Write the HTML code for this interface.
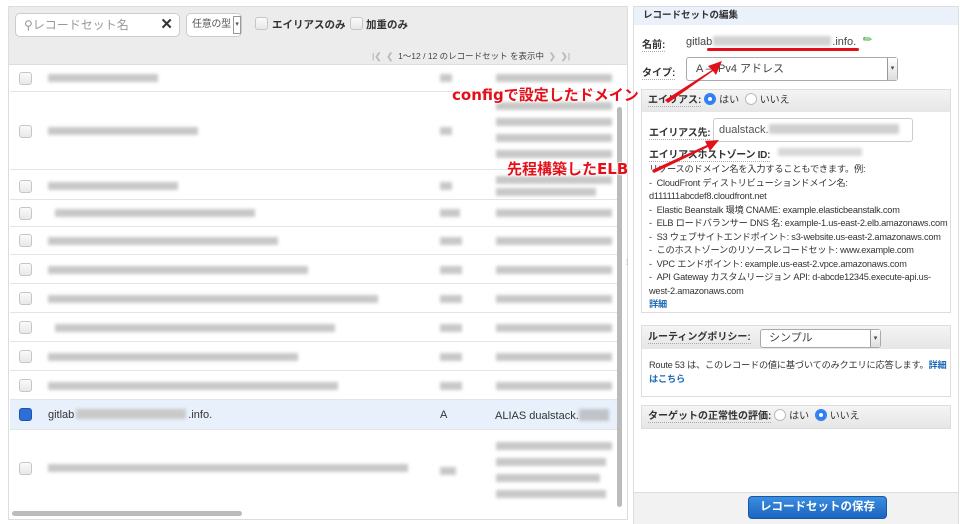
<!DOCTYPE html>
<html><head><meta charset="utf-8">
<style>
*{box-sizing:border-box;margin:0;padding:0}
body{width:960px;height:524px;overflow:hidden;background:#fff;font-family:"Liberation Sans","Noto Sans CJK JP",sans-serif;font-size:11px;color:#333;position:relative}
.a{position:absolute;white-space:nowrap}
.bl{position:absolute;background:#c8c8c8;filter:blur(1.5px);height:8px}
.cb{position:absolute;width:13px;height:13px;border:1px solid #c6c6c6;border-radius:3px;background:linear-gradient(#fafafa,#e8e8e8)}
.row{position:absolute;left:10px;width:608px;border-bottom:1px solid #e4e4e4}
.lbl{font-weight:bold;border-bottom:1px dotted #aaa}
.red{position:absolute;color:#e3101a;font-weight:bold;font-size:15px;text-shadow:0 0 2px #fff,0 0 2px #fff,0 0 2px #fff;font-family:"Noto Sans CJK JP",sans-serif;white-space:nowrap}
.sel{position:absolute;border:1px solid #aaa;border-radius:3px;background:#fff;white-space:nowrap}
.dd{position:absolute;right:0;top:0;bottom:0;width:10px;border-left:1px solid #999;background:linear-gradient(#fff,#ddd);font-size:7px;text-align:center}
.radio{display:inline-block;width:12px;height:12px;border-radius:50%;border:1px solid #bbb;background:#fff;vertical-align:-2px;margin-right:3px}
.radio.on{background:#2f7ff0;border-color:#2f7ff0;box-shadow:inset 0 0 0 3px #2f7ff0,inset 0 0 0 6px #fff}
.txt{font-size:9.2px;line-height:13.5px;color:#333;letter-spacing:-0.2px;white-space:nowrap}
</style></head><body>
<div class="a" style="left:8px;top:6px;width:620px;height:514px;border:1px solid #ddd"></div>
<div class="a" style="left:9px;top:7px;width:618px;height:58px;background:#ececec;border-bottom:1px solid #ddd"></div>
<div class="a" style="left:15px;top:13px;width:165px;height:24px;border:1px solid #ccc;border-radius:5px;background:#fff;color:#999;font-size:12px;line-height:22px;padding-left:8px">⚲レコードセット名<span style="position:absolute;right:6px;color:#333;font-size:15px;font-weight:bold">✕</span></div>
<div class="a" style="left:186px;top:13px;width:56px;height:24px;border:1px solid #ccc;border-radius:5px;background:#fff;font-size:10px;line-height:22px;padding-left:5px;color:#555;letter-spacing:-0.3px"><span style="display:inline-block;line-height:22px;vertical-align:top">任意の型</span><span style="position:absolute;right:0;top:2px;width:8px;height:18px;border:1px solid #999;font-size:7px;line-height:16px;text-align:center;background:#fff">▾</span></div>
<div class="cb" style="left:255px;top:17px"></div>
<div class="a" style="left:272px;top:17px;font-weight:bold;font-size:10.5px">エイリアスのみ</div>
<div class="cb" style="left:350px;top:17px"></div>
<div class="a" style="left:366px;top:17px;font-weight:bold;font-size:10.5px">加重のみ</div>
<div class="a" style="left:372px;top:50px;font-size:8.5px;color:#444"><span style="color:#bbb;font-weight:bold">|❮ &nbsp;❮</span> &nbsp;1～12 / 12 のレコードセット を表示中 <span style="color:#bbb;font-weight:bold">&nbsp;❯ &nbsp;❯|</span></div>

<div class="row" style="top:65px;height:27px"></div>
<div class="row" style="top:92px;height:78px"></div>
<div class="row" style="top:170px;height:30px"></div>
<div class="row" style="top:200px;height:27px"></div>
<div class="row" style="top:227px;height:28px"></div>
<div class="row" style="top:255px;height:29px"></div>
<div class="row" style="top:284px;height:29px"></div>
<div class="row" style="top:313px;height:29px"></div>
<div class="row" style="top:342px;height:29px"></div>
<div class="row" style="top:371px;height:29px"></div>
<div class="row" style="top:400px;height:30px;background:#e8f0fb"></div>
<div class="cb" style="left:19px;top:72px"></div>
<div class="cb" style="left:19px;top:125px"></div>
<div class="cb" style="left:19px;top:180px"></div>
<div class="cb" style="left:19px;top:207px"></div>
<div class="cb" style="left:19px;top:234px"></div>
<div class="cb" style="left:19px;top:263px"></div>
<div class="cb" style="left:19px;top:292px"></div>
<div class="cb" style="left:19px;top:321px"></div>
<div class="cb" style="left:19px;top:350px"></div>
<div class="cb" style="left:19px;top:379px"></div>
<div class="a" style="left:19px;top:408px;width:13px;height:13px;border-radius:3px;background:#2d6fd6;border:1px solid #1c55b0"></div>
<div class="cb" style="left:19px;top:462px"></div>

<div class="bl" style="left:48px;top:74px;width:110px"></div><div class="bl" style="left:440px;top:74px;width:12px"></div><div class="bl" style="left:496px;top:74px;width:116px"></div>
<div class="bl" style="left:48px;top:127px;width:150px"></div><div class="bl" style="left:440px;top:127px;width:12px"></div>
<div class="bl" style="left:496px;top:102px;width:116px"></div><div class="bl" style="left:496px;top:118px;width:116px"></div><div class="bl" style="left:496px;top:134px;width:116px"></div><div class="bl" style="left:496px;top:150px;width:116px"></div>
<div class="bl" style="left:48px;top:182px;width:130px"></div><div class="bl" style="left:440px;top:182px;width:12px"></div><div class="bl" style="left:496px;top:176px;width:116px"></div><div class="bl" style="left:496px;top:188px;width:100px"></div>
<div class="bl" style="left:55px;top:209px;width:200px"></div><div class="bl" style="left:440px;top:209px;width:20px"></div><div class="bl" style="left:496px;top:209px;width:116px"></div>
<div class="bl" style="left:48px;top:237px;width:230px"></div><div class="bl" style="left:440px;top:237px;width:22px"></div><div class="bl" style="left:496px;top:237px;width:116px"></div>
<div class="bl" style="left:48px;top:266px;width:260px"></div><div class="bl" style="left:440px;top:266px;width:22px"></div><div class="bl" style="left:496px;top:266px;width:116px"></div>
<div class="bl" style="left:48px;top:295px;width:330px"></div><div class="bl" style="left:440px;top:295px;width:22px"></div><div class="bl" style="left:496px;top:295px;width:116px"></div>
<div class="bl" style="left:55px;top:324px;width:280px"></div><div class="bl" style="left:440px;top:324px;width:22px"></div><div class="bl" style="left:496px;top:324px;width:116px"></div>
<div class="bl" style="left:48px;top:353px;width:250px"></div><div class="bl" style="left:440px;top:353px;width:22px"></div><div class="bl" style="left:496px;top:353px;width:116px"></div>
<div class="bl" style="left:48px;top:382px;width:290px"></div><div class="bl" style="left:440px;top:382px;width:22px"></div><div class="bl" style="left:496px;top:382px;width:116px"></div>
<div class="a" style="left:48px;top:409px;font-size:11px">gitlab<span style="display:inline-block;width:110px;height:10px;background:#c9c9c9;filter:blur(1.5px);margin:0 2px;vertical-align:-1px"></span>.info.</div>
<div class="a" style="left:440px;top:409px;font-size:11px">A</div>
<div class="a" style="left:495px;top:409px;font-size:11px">ALIAS dualstack.<span style="display:inline-block;width:30px;height:12px;background:#c0c4c8;filter:blur(1.5px);vertical-align:-2px"></span></div>
<div class="bl" style="left:48px;top:464px;width:360px"></div><div class="bl" style="left:440px;top:467px;width:16px"></div>
<div class="bl" style="left:496px;top:442px;width:116px"></div><div class="bl" style="left:496px;top:458px;width:110px"></div><div class="bl" style="left:496px;top:474px;width:104px"></div><div class="bl" style="left:496px;top:490px;width:110px"></div>

<div class="a" style="left:617px;top:107px;width:5px;height:400px;background:#bbb;border-radius:3px"></div>
<div class="a" style="left:12px;top:511px;width:230px;height:5px;background:#bbb;border-radius:3px"></div>
<div class="a" style="left:626px;top:258px;font-size:8px;color:#999">⁞</div>

<div class="a" style="left:633px;top:6px;width:326px;height:518px;border:1px solid #ddd;background:#fff"></div>
<div class="a" style="left:634px;top:7px;width:324px;height:18px;background:#eaf1fb;font-size:9.5px;font-weight:bold;line-height:18px;padding-left:9px;color:#333">レコードセットの編集</div>
<div class="a lbl" style="left:642px;top:36px;font-size:10px">名前:</div>
<div class="a" style="left:686px;top:36px;font-size:11px;color:#444">gitlab<span style="display:inline-block;width:118px;height:10px;background:#d2d2d2;filter:blur(1.5px);margin:0 1px;vertical-align:-1px"></span>.info.</div>
<div class="a" style="left:863px;top:33px;color:#3a3;font-size:11px;transform:rotate(-40deg)">✎</div>
<div class="a" style="left:707px;top:48px;width:152px;height:3px;background:#e3101a;border-radius:2px"></div>
<div class="a lbl" style="left:642px;top:64px;font-size:10px">タイプ:</div>
<div class="sel" style="left:686px;top:57px;width:212px;height:24px;font-size:11px;line-height:22px;padding-left:9px;color:#444">A – IPv4 アドレス<div class="dd" style="line-height:22px">▾</div></div>

<div class="a" style="left:641px;top:89px;width:310px;height:224px;border:1px solid #ddd"></div>
<div class="a" style="left:642px;top:90px;width:308px;height:22px;background:linear-gradient(#f4f4f4,#e6e6e6);font-size:10px;line-height:22px;padding-left:6px"><span class="lbl">エイリアス:</span> <span class="radio on"></span>はい &nbsp;<span class="radio"></span>いいえ</div>
<div class="a lbl" style="left:649px;top:124px;font-size:10px;letter-spacing:-0.3px">エイリアス先:</div>
<div class="a" style="left:713px;top:118px;width:200px;height:24px;border:1px solid #ccc;border-radius:3px;font-size:11px;line-height:22px;padding-left:5px;color:#555">dualstack.<span style="display:inline-block;width:130px;height:10px;background:#d0d0d0;filter:blur(1.5px);vertical-align:-1px"></span></div>
<div class="a lbl" style="left:649px;top:146px;font-size:10px;letter-spacing:-0.3px">エイリアスホストゾーン ID:</div>
<div class="bl" style="left:778px;top:148px;width:84px;background:#d8d8d8"></div>
<div class="a txt" style="left:649px;top:163px;width:300px">リソースのドメイン名を入力することもできます。例:<br>- &nbsp;CloudFront ディストリビューションドメイン名:<br>d111111abcdef8.cloudfront.net<br>- &nbsp;Elastic Beanstalk 環境 CNAME: example.elasticbeanstalk.com<br>- &nbsp;ELB ロードバランサー DNS 名: example-1.us-east-2.elb.amazonaws.com<br>- &nbsp;S3 ウェブサイトエンドポイント: s3-website.us-east-2.amazonaws.com<br>- &nbsp;このホストゾーンのリソースレコードセット: www.example.com<br>- &nbsp;VPC エンドポイント: example.us-east-2.vpce.amazonaws.com<br>- &nbsp;API Gateway カスタムリージョン API: d-abcde12345.execute-api.us-<br>west-2.amazonaws.com<br><span style="color:#1f6bb5;font-weight:bold">詳細</span></div>

<div class="a" style="left:641px;top:325px;width:310px;height:72px;border:1px solid #ddd"></div>
<div class="a" style="left:642px;top:326px;width:308px;height:23px;background:linear-gradient(#f4f4f4,#e6e6e6);font-size:10px;line-height:23px;padding-left:6px"><span class="lbl">ルーティングポリシー:</span></div>
<div class="sel" style="left:760px;top:329px;width:121px;height:19px;font-size:11px;line-height:17px;padding-left:8px;color:#444">シンプル<div class="dd" style="line-height:17px">▾</div></div>
<div class="a txt" style="left:649px;top:358px;width:300px;line-height:14px">Route 53 は、このレコードの値に基づいてのみクエリに応答します。<span style="color:#1f6bb5;font-weight:bold">詳細</span><br><span style="color:#1f6bb5;font-weight:bold">はこちら</span></div>

<div class="a" style="left:641px;top:405px;width:310px;height:24px;border:1px solid #ddd;background:linear-gradient(#f4f4f4,#e6e6e6);font-size:10px;line-height:22px;padding-left:6px"><span class="lbl">ターゲットの正常性の評価:</span> <span class="radio"></span>はい &nbsp;<span class="radio on"></span>いいえ</div>

<div class="a" style="left:634px;top:492px;width:324px;height:32px;background:#f2f2f2;border-top:1px solid #ddd"></div>
<div class="a" style="left:748px;top:496px;width:139px;height:23px;border-radius:4px;background:linear-gradient(#3a8ee0,#1c64c0);border:1px solid #1a56a6;color:#fff;font-weight:bold;font-size:11.5px;line-height:21px;text-align:center">レコードセットの保存</div>

<svg class="a" style="left:0;top:0" width="960" height="524">
<polygon points="665,100 712,70 708,66 722,61 716,75 713,71 668,103" fill="#e3101a"/>
<polygon points="652,170 707,145 705,141 719,140 710,151 708,147 654,173" fill="#e3101a"/>
</svg>
<div class="red" style="left:452px;top:84px"><span style="font-family:'DejaVu Sans',sans-serif">config</span>で設定したドメイン</div>
<div class="red" style="left:507px;top:158px">先程構築した<span style="font-family:'DejaVu Sans',sans-serif">ELB</span></div>
</body></html>
